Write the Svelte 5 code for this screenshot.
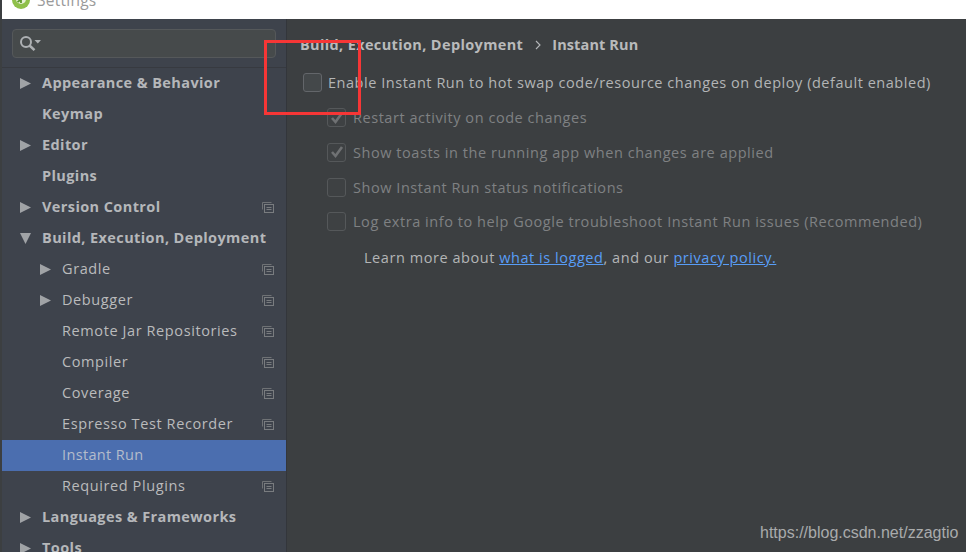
<script>
  const rows = [
    { label: 'Appearance & Behavior', bold: true, arrow: 'right' },
    { label: 'Keymap', bold: true },
    { label: 'Editor', bold: true, arrow: 'right' },
    { label: 'Plugins', bold: true },
    { label: 'Version Control', bold: true, arrow: 'right', copy: true },
    { label: 'Build, Execution, Deployment', bold: true, arrow: 'down' },
    { label: 'Gradle', sub: true, arrow: 'right', copy: true },
    { label: 'Debugger', sub: true, arrow: 'right', copy: true },
    { label: 'Remote Jar Repositories', sub: true, copy: true },
    { label: 'Compiler', sub: true, copy: true },
    { label: 'Coverage', sub: true, copy: true },
    { label: 'Espresso Test Recorder', sub: true, copy: true },
    { label: 'Instant Run', sub: true, selected: true },
    { label: 'Required Plugins', sub: true, copy: true },
    { label: 'Languages & Frameworks', bold: true, arrow: 'right' },
    { label: 'Tools', bold: true, arrow: 'right' }
  ];
  const options = [
    { label: 'Restart activity on code changes', checked: true },
    { label: 'Show toasts in the running app when changes are applied', checked: true },
    { label: 'Show Instant Run status notifications' },
    { label: 'Log extra info to help Google troubleshoot Instant Run issues (Recommended)' }
  ];
</script>

<div class="window">
  <header class="titlebar">
    <svg class="logo" viewBox="0 0 18 18" width="18" height="18" aria-hidden="true">
      <circle cx="9" cy="9" r="9" fill="#8fc04a" />
      <circle cx="9" cy="8" r="5" fill="#e6f0d6" />
      <path d="M9 4v8M5.5 11l7-5" stroke="#5f9a2c" stroke-width="1.8" fill="none" />
    </svg>
    <span class="title">Settings</span>
  </header>

  <div class="main">
    <aside class="sidebar">
      <div class="searchwrap">
        <div class="search">
          <svg viewBox="0 0 24 18" width="24" height="18" aria-hidden="true">
            <circle cx="7" cy="8" r="5" fill="none" stroke="#adb0b3" stroke-width="2" />
            <path d="M10.5 11.5l5 4.6" stroke="#adb0b3" stroke-width="2.6" fill="none" />
            <path d="M15.5 6h6.5l-3.2 3.6z" fill="#adb0b3" />
          </svg>
        </div>
      </div>
      <nav class="tree">
        {#each rows as row}
          <div class="row" class:sub={row.sub} class:selected={row.selected}>
            {#if row.arrow === 'right'}
              <svg class="arrow" viewBox="0 0 11 11" width="11" height="11" aria-hidden="true"><path d="M0 0L11 5.5L0 11z" fill="#a0a3a6" /></svg>
            {:else if row.arrow === 'down'}
              <svg class="arrow" viewBox="0 0 11 11" width="11" height="11" aria-hidden="true"><path d="M0 0L11 0L5.5 11z" fill="#a0a3a6" /></svg>
            {/if}
            <span class="label" class:bold={row.bold}>{row.label}</span>
            {#if row.copy}
              <svg class="copy" viewBox="0 0 12 12" width="12" height="12" aria-hidden="true">
                <path d="M9.5 1.5H0.5V8.5" fill="none" stroke="#6f7275" />
                <rect x="2.5" y="3.5" width="9" height="8" fill="#3e434c" stroke="#797c7f" />
                <path d="M4.5 6.5h5M4.5 8.5h5" stroke="#797c7f" />
              </svg>
            {/if}
          </div>
        {/each}
      </nav>
    </aside>

    <section class="content">
      <div class="crumbs">
        <span>Build, Execution, Deployment</span>
        <svg viewBox="0 0 6 10" width="6" height="10" aria-hidden="true"><path d="M1 1l4 4-4 4" fill="none" stroke="#b5b7b9" stroke-width="1.1" /></svg>
        <span class="leaf">Instant Run</span>
      </div>
      <div class="option master">
        <span class="box"></span>
        <span>Enable Instant Run to hot swap code/resource changes on deploy (default enabled)</span>
      </div>
      <div class="group">
        {#each options as opt}
          <div class="option dim">
            <span class="box off">
              {#if opt.checked}
                <svg viewBox="0 0 16 16" width="16" height="16" aria-hidden="true"><path d="M3 8l3.5 4L13 3" fill="none" stroke="#6f7173" stroke-width="2.6" /></svg>
              {/if}
            </span>
            <span>{opt.label}</span>
          </div>
        {/each}
      </div>
      <p class="more">Learn more about <a href="#logged">what is logged</a>, and our <a href="#privacy">privacy policy.</a></p>
    </section>
  </div>

  <div class="redbox"></div>
  <div class="watermark">https://blog.csdn.net/zzagtio</div>
</div>

<style>
  :global(body) {
    margin: 0;
    background: #3c3f41;
  }
  .window {
    position: relative;
    width: 966px;
    height: 552px;
    overflow: hidden;
    display: flex;
    flex-direction: column;
    font-family: "Open Sans", "Noto Sans", sans-serif;
    font-size: 14.5px;
    letter-spacing: 0.55px;
    color: #babbbc;
  }
  .titlebar {
    height: 19px;
    flex: none;
    background: #fff;
    margin-left: 2px;
    display: flex;
    align-items: flex-end;
    overflow: hidden;
  }
  .logo {
    margin-left: 10px;
    margin-bottom: 10px;
    flex: none;
  }
  .title {
    margin-left: 7px;
    font-size: 15.5px;
    letter-spacing: 0.25px;
    line-height: 27px;
    margin-bottom: 5px;
    color: #9a9a9a;
  }
  .main {
    flex: 1;
    display: flex;
    min-height: 0;
    background: #3c3f41;
  }
  .sidebar {
    width: 284px;
    margin-left: 2px;
    flex: none;
    background: #3e434c;
    border-right: 1px solid #33363b;
    display: flex;
    flex-direction: column;
  }
  .searchwrap {
    height: 49px;
    box-sizing: border-box;
    padding: 10px;
    border-bottom: 1px solid #373a40;
    flex: none;
  }
  .search {
    height: 29px;
    box-sizing: border-box;
    width: 264px;
    background: #464a4b;
    border: 1px solid #55585a;
    border-radius: 4px;
    padding: 4px 0 0 6px;
  }
  .search svg {
    display: block;
  }
  .row {
    height: 31px;
    box-sizing: border-box;
    padding-bottom: 2px;
    display: flex;
    align-items: center;
    position: relative;
    padding-left: 40px;
    white-space: nowrap;
  }
  .row.sub {
    padding-left: 60px;
    letter-spacing: 0.6px;
  }
  .row.selected {
    background: #4b6eaf;
    color: #b4bccb;
  }
  .row.selected .label {
    letter-spacing: 0.35px;
  }
  .bold {
    font-weight: 700;
    letter-spacing: 0.4px;
    color: #b5b7ba;
  }
  .arrow {
    position: absolute;
    left: 18px;
    top: 10px;
  }
  .sub .arrow {
    left: 38px;
  }
  .copy {
    position: absolute;
    left: 260px;
    top: 9px;
  }
  .content {
    flex: 1;
    min-width: 0;
    padding-left: 13px;
    white-space: nowrap;
  }
  .crumbs {
    height: 49px;
    box-sizing: border-box;
    padding-top: 2px;
    display: flex;
    align-items: center;
    gap: 12px;
    font-weight: 700;
    letter-spacing: 0.36px;
    color: #b9babb;
  }
  .crumbs .leaf {
    margin-left: -1px;
    letter-spacing: 0.12px;
  }
  .option {
    display: flex;
    align-items: center;
    gap: 7px;
    height: 34.67px;
  }
  .master {
    height: 28px;
    margin-left: 3px;
    gap: 6px;
    letter-spacing: 0.535px;
    color: #b3b5b6;
  }
  .group {
    margin-top: 4.4px;
    margin-left: 27px;
  }
  .dim {
    color: #7f8183;
  }
  .box {
    width: 19px;
    height: 19px;
    box-sizing: border-box;
    border: 1px solid #63666a;
    border-radius: 3px;
    background: #44484a;
    flex: none;
    display: flex;
    align-items: center;
    justify-content: center;
  }
  .box.off {
    background: #3e4143;
    border-color: #55585a;
  }
  .more {
    margin: 0 0 0 64px;
    color: #b3b5b6;
    line-height: 38px;
  }
  .more a {
    color: #589df6;
  }
  .redbox {
    position: absolute;
    left: 264px;
    top: 40px;
    width: 97px;
    height: 75px;
    box-sizing: border-box;
    border: 3px solid #f63636;
  }
  .watermark {
    position: absolute;
    left: 760px;
    top: 524px;
    font-family: "Liberation Sans", Arial, sans-serif;
    font-size: 16px;
    letter-spacing: 0;
    line-height: 18px;
    color: #a9abac;
  }
</style>
